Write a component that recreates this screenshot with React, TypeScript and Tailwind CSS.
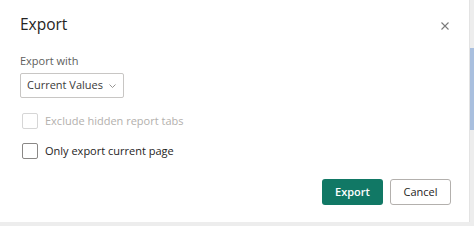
import React from 'react';

const App: React.FC = () => {
  return (
    <div className="w-[474px] h-[226px] bg-[#ededed] flex overflow-hidden" style={{ fontFamily: '"Open Sans", "Noto Sans", sans-serif' }}>
      <div className="w-[470px] h-[222px] bg-white shrink-0 flex flex-col pl-5 pr-[18px] border-r border-[#e3e3e3]">
        <div className="flex items-start justify-between pt-[12px]">
          <h1 className="text-[15.5px] leading-[24px] text-[#252423]">Export</h1>
          <button className="mt-[10px] mr-[2px] text-[#7a7a7a]">
            <svg width="8" height="8" viewBox="0 0 8 8" fill="none" stroke="currentColor" strokeWidth="1.1">
              <path d="M0.5 0.5 L7.5 7.5 M7.5 0.5 L0.5 7.5" />
            </svg>
          </button>
        </div>
        <div className="mt-[17px] text-[11px] leading-[15px] text-[#605e5c]">Export with</div>
        <div className="mt-[5px] w-[104px] h-[25px] border border-[#c8c6c4] rounded-[2px] flex items-center justify-between pl-[6px] pr-[7px]">
          <span className="text-[11px] whitespace-nowrap text-[#3b3a39]">Current Values</span>
          <svg width="7" height="4" viewBox="0 0 7 4" fill="none" stroke="#8a8886" strokeWidth="0.9">
            <path d="M0.5 0.5 L3.5 3.5 L6.5 0.5" />
          </svg>
        </div>
        <div className="mt-[15px] flex flex-col gap-[14px] pl-[2px]">
          <label className="flex items-center gap-[7px]">
            <span className="w-[16px] h-[16px] border border-[#d6d6d6] rounded-[2px]" />
            <span className="text-[11px] leading-[16px] text-[#b3b0ad]">Exclude hidden report tabs</span>
          </label>
          <label className="flex items-center gap-[7px]">
            <span className="w-[16px] h-[16px] border border-[#8a8886] rounded-[2px]" />
            <span className="text-[11px] leading-[16px] text-[#252423]">Only export current page</span>
          </label>
        </div>
        <div className="mt-auto mb-[17px] flex justify-end gap-[7px]">
          <button className="w-[61px] h-[26px] rounded-[3px] bg-[#117865] text-white text-[11px] font-semibold">Export</button>
          <button className="w-[61px] h-[26px] rounded-[3px] border border-[#b3b0ad] bg-white text-[#252423] text-[11px]">Cancel</button>
        </div>
      </div>
      <div className="w-[4px] h-full flex flex-col">
        <div className="h-[48px]" />
        <div className="h-[82px] bg-[#a9bfde]" />
      </div>
    </div>
  );
};

export default App;
